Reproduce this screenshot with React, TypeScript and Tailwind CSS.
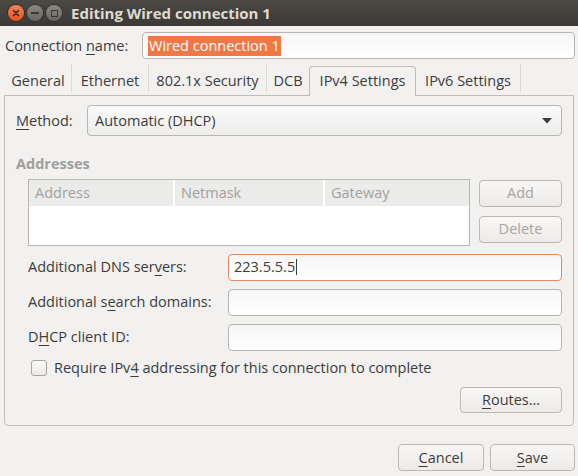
import React from "react";

const font = { fontFamily: '"Open Sans", "Noto Sans", "DejaVu Sans", sans-serif' };

function U({ children }: { children: React.ReactNode }) {
  return <span className="underline underline-offset-[3px] decoration-1">{children}</span>;
}

function Field({ value, focused, cursor }: { value?: string; focused?: boolean; cursor?: boolean }) {
  return (
    <div
      className={`flex h-[27px] flex-1 items-center rounded-[4px] border bg-gradient-to-b from-[#f6f6f6] to-white px-[5px] ${
        focused ? "border-[#e48a62]" : "border-[#b9b6b2]"
      }`}
    >
      {value && <span className="text-[#3c3c3c]">{value}</span>}
      {cursor && <span className="ml-[1px] h-[16px] w-[1px] bg-[#3c3c3c]" />}
    </div>
  );
}

function Btn({ children, disabled, className = "" }: { children: React.ReactNode; disabled?: boolean; className?: string }) {
  return (
    <div
      className={`flex items-center justify-center rounded-[4px] border border-[#bcb9b5] bg-gradient-to-b from-[#f8f7f6] to-[#ecebe9] ${
        disabled ? "text-[#a8a6a3]" : "text-[#3c3c3c]"
      } ${className}`}
    >
      {children}
    </div>
  );
}

const tabs = [
  { label: "General", w: "w-[66px]", sep: true },
  { label: "Ethernet", w: "w-[76px]", sep: true },
  { label: "802.1x Security", w: "w-[117px]", sep: true },
  { label: "DCB", w: "w-[42px]", sep: false },
  { label: "IPv4 Settings", w: "w-[107px]", sep: false, active: true },
  { label: "IPv6 Settings", w: "w-[104px]", sep: true },
];

export default function App() {
  return (
    <div className="h-[476px] w-[578px] overflow-hidden bg-[#f2f1f0] text-[14.5px] text-[#3c3c3c]" style={font}>
      {/* title bar */}
      <div className="flex h-[26px] items-center bg-gradient-to-b from-[#4a4944] to-[#3a3935] pl-[8px]">
        <div className="flex items-center gap-[3px]">
          <div className="flex h-[16px] w-[16px] items-center justify-center rounded-full bg-gradient-to-b from-[#f8845a] to-[#e0501c] shadow-[0_0_0_1px_#3a2a22]">
            <svg width="8" height="8" viewBox="0 0 8 8">
              <path d="M1.5 1.5 L6.5 6.5 M6.5 1.5 L1.5 6.5" stroke="#3a2418" strokeWidth="1.5" strokeLinecap="round" />
            </svg>
          </div>
          <div className="flex h-[16px] w-[16px] items-center justify-center rounded-full bg-gradient-to-b from-[#8a8984] to-[#66655f] shadow-[0_0_0_1px_#33322e]">
            <div className="h-[1.5px] w-[8px] bg-[#3a3935]" />
          </div>
          <div className="flex h-[16px] w-[16px] items-center justify-center rounded-full bg-gradient-to-b from-[#8a8984] to-[#66655f] shadow-[0_0_0_1px_#33322e]">
            <div className="h-[7px] w-[7px] border-[1.5px] border-[#3a3935]" />
          </div>
        </div>
        <div className="ml-[9px] text-[15px] font-bold text-[#dfdbd2]">Editing Wired connection 1</div>
      </div>

      {/* connection name */}
      <div className="mt-[6px] flex items-center pl-[5px] pr-[3px]">
        <div className="w-[137px]">
          Connection <U>n</U>ame:
        </div>
        <div className="flex h-[27px] flex-1 items-center rounded-[4px] border border-[#b9b6b2] bg-gradient-to-b from-[#f6f6f6] to-white px-[5px]">
          <span className="bg-[#f07746] px-[1px] leading-[20px] text-white">Wired connection 1</span>
        </div>
      </div>

      {/* tabs */}
      <div className="mt-[5px] flex h-[31px] items-end pl-[5px]">
        {tabs.map((t) => {
          if (t.active) {
            return (
              <div
                key={t.label}
                className={`relative z-10 -mb-[1px] flex h-[30px] items-center justify-center rounded-t-[4px] border border-b-0 border-[#c0bdb8] bg-[#f2f1f0] pb-[2px] ${t.w}`}
              >
                {t.label}
              </div>
            );
          }
          return (
            <div key={t.label} className="flex h-[31px] items-start">
              <div className={`flex h-[31px] items-center justify-center pt-[3px] ${t.w}`}>{t.label}</div>
              {t.sep && <div className="h-[28px] w-[1px] bg-[#dcdad6]" />}
            </div>
          );
        })}
      </div>

      {/* tab panel */}
      <div className="mx-[4px] h-[331px] rounded-b-[4px] border border-[#c0bdb8] pl-[11px] pr-[11px] pt-[9px]">
        <div className="flex items-center">
          <div className="w-[71px]">
            <U>M</U>ethod:
          </div>
          <div className="flex h-[31px] flex-1 items-center justify-between rounded-[4px] border border-[#b9b6b2] bg-gradient-to-b from-[#fafafa] to-[#eeedec] pl-[7px] pr-[9px]">
            <span>Automatic (DHCP)</span>
            <svg width="10" height="6" viewBox="0 0 10 6">
              <path d="M0 0 L10 0 L5 5.5 Z" fill="#3c3c3c" />
            </svg>
          </div>
        </div>

        <div className="mt-[17px] font-bold text-[#a09e9b]">Addresses</div>

        <div className="mt-[4px] flex pl-[12px]">
          <div className="h-[67px] w-[443px] border border-[#b8b6b2] bg-white">
            <div className="flex h-[26px] gap-[2px] bg-white text-[#a3a19e]">
              <div className="flex w-[144px] items-center bg-[#ebebea] pl-[6px]">Address</div>
              <div className="flex w-[148px] items-center bg-[#ebebea] pl-[6px]">Netmask</div>
              <div className="flex flex-1 items-center bg-[#ebebea] pl-[6px]">Gateway</div>
            </div>
          </div>
          <div className="ml-[9px] flex flex-col gap-[9px] pt-[1px]">
            <Btn disabled className="h-[27px] w-[83px]">
              Add
            </Btn>
            <Btn disabled className="h-[27px] w-[83px]">
              Delete
            </Btn>
          </div>
        </div>

        <div className="mt-[8px] flex flex-col gap-[8px] pl-[12px]">
          <div className="flex items-center">
            <div className="w-[200px]">
              Additional DNS ser<U>v</U>ers:
            </div>
            <Field value="223.5.5.5" focused cursor />
          </div>
          <div className="flex items-center">
            <div className="w-[200px]">
              Additional s<U>e</U>arch domains:
            </div>
            <Field />
          </div>
          <div className="flex items-center">
            <div className="w-[200px]">
              D<U>H</U>CP client ID:
            </div>
            <Field />
          </div>
        </div>

        <div className="mt-[6px] flex items-center pl-[15px]">
          <div className="h-[16px] w-[16px] rounded-[3px] border border-[#a8a5a1] bg-gradient-to-b from-[#fafafa] to-[#ebeae8]" />
          <div className="ml-[7px]">
            Require IPv<U>4</U> addressing for this connection to complete
          </div>
        </div>

        <div className="mt-[8px] flex justify-end">
          <Btn className="h-[26px] w-[102px]">
            <span>
              <U>R</U>outes…
            </span>
          </Btn>
        </div>
      </div>

      {/* dialog buttons */}
      <div className="mt-[18px] flex justify-end gap-[6px] pr-[3px]">
        <Btn className="h-[27px] w-[86px]">
          <span>
            <U>C</U>ancel
          </span>
        </Btn>
        <Btn className="h-[27px] w-[85px]">
          <span>
            <U>S</U>ave
          </span>
        </Btn>
      </div>
    </div>
  );
}
